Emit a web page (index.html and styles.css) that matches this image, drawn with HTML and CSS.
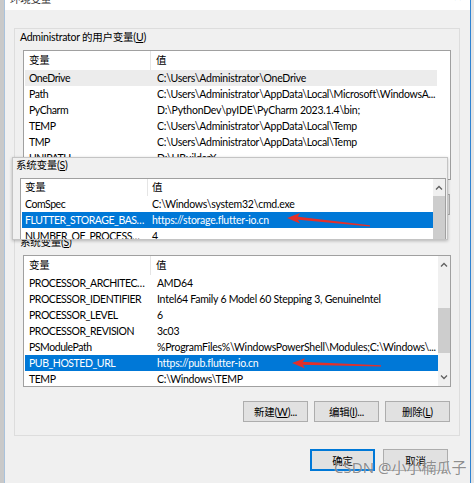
FILE: index.html
```html
<!DOCTYPE html>
<html lang="zh-CN">
<head>
    <meta charset="UTF-8">
    <title>环境变量</title>
    <link rel="stylesheet" href="styles.css">
</head>
<body>
    <div class="screen">
        <div class="edge-left"></div>
        <div class="dialog">
            <div class="titlebar">
                <span class="title">环境变量</span>
                <span class="close">✕</span>
            </div>
            <div class="dialog-body">
                <div class="group">
                    <div class="label">Administrator 的用户变量(<u>U</u>)</div>
                    <div class="list user-list">
                        <div class="list-head">
                            <div class="col-name">变量</div>
                            <div class="col-value">值</div>
                        </div>
                        <div class="list-main">
                            <div class="rows">
                                <div class="row hover"><div class="col-name">OneDrive</div><div class="col-value">C:\Users\Administrator\OneDrive</div></div>
                                <div class="row"><div class="col-name">Path</div><div class="col-value">C:\Users\Administrator\AppData\Local\Microsoft\WindowsA...</div></div>
                                <div class="row"><div class="col-name">PyCharm</div><div class="col-value">D:\PythonDev\pyIDE\PyCharm 2023.1.4\bin;</div></div>
                                <div class="row"><div class="col-name">TEMP</div><div class="col-value">C:\Users\Administrator\AppData\Local\Temp</div></div>
                                <div class="row"><div class="col-name">TMP</div><div class="col-value">C:\Users\Administrator\AppData\Local\Temp</div></div>
                                <div class="row"><div class="col-name">UNIPATH</div><div class="col-value">D:\HBuilderX</div></div>
                            </div>
                            <div class="scroll-blank"></div>
                        </div>
                    </div>
                    <div class="btn-row">
                        <button class="btn">新建(<u>N</u>)...</button>
                        <button class="btn">编辑(<u>E</u>)...</button>
                        <button class="btn">删除(<u>D</u>)</button>
                    </div>

                    <div class="label sys-label">系统变量(<u>S</u>)</div>
                    <div class="list sys-list">
                        <div class="list-main">
                            <div class="rows">
                                <div class="list-head">
                                    <div class="col-name">变量</div>
                                    <div class="col-value">值</div>
                                </div>
                                <div class="row"><div class="col-name">PROCESSOR_ARCHITECTURE</div><div class="col-value">AMD64</div></div>
                                <div class="row"><div class="col-name">PROCESSOR_IDENTIFIER</div><div class="col-value">Intel64 Family 6 Model 60 Stepping 3, GenuineIntel</div></div>
                                <div class="row"><div class="col-name">PROCESSOR_LEVEL</div><div class="col-value">6</div></div>
                                <div class="row"><div class="col-name">PROCESSOR_REVISION</div><div class="col-value">3c03</div></div>
                                <div class="row"><div class="col-name">PSModulePath</div><div class="col-value">%ProgramFiles%\WindowsPowerShell\Modules;C:\Windows\...</div></div>
                                <div class="row selected"><div class="col-name">PUB_HOSTED_URL</div><div class="col-value">https://pub.flutter-io.cn</div></div>
                                <div class="row"><div class="col-name">TEMP</div><div class="col-value">C:\Windows\TEMP</div></div>
                            </div>
                            <div class="scrollbar">
                                <div class="arrow"><svg width="8" height="5" viewBox="0 0 8 5"><polyline points="1,4.5 4,1.5 7,4.5" fill="none" stroke="#606060" stroke-width="1.3"/></svg></div>
                                <div class="track"><div class="thumb sys-thumb"></div></div>
                                <div class="arrow"><svg width="8" height="5" viewBox="0 0 8 5"><polyline points="1,0.5 4,3.5 7,0.5" fill="none" stroke="#606060" stroke-width="1.3"/></svg></div>
                            </div>
                        </div>
                    </div>
                    <div class="btn-row">
                        <button class="btn">新建(<u>W</u>)...</button>
                        <button class="btn">编辑(<u>I</u>)...</button>
                        <button class="btn">删除(<u>L</u>)</button>
                    </div>
                </div>

                <div class="footer">
                    <button class="btn btn-default">确定</button>
                    <button class="btn">取消</button>
                </div>
            </div>
        </div>
        <div class="edge-right"></div>

        <!-- pasted crop of the system variables list -->
        <div class="overlay">
            <div class="label overlay-label">系统变量(<u>S</u>)</div>
            <div class="list overlay-list">
                <div class="list-main">
                    <div class="rows">
                        <div class="list-head">
                            <div class="col-name">变量</div>
                            <div class="col-value">值</div>
                        </div>
                        <div class="row"><div class="col-name">ComSpec</div><div class="col-value">C:\Windows\system32\cmd.exe</div></div>
                        <div class="row selected"><div class="col-name">FLUTTER_STORAGE_BASE_URL</div><div class="col-value">https://storage.flutter-io.cn</div></div>
                        <div class="row"><div class="col-name">NUMBER_OF_PROCESSORS</div><div class="col-value">4</div></div>
                    </div>
                    <div class="scrollbar">
                        <div class="arrow"><svg width="8" height="5" viewBox="0 0 8 5"><polyline points="1,4.5 4,1.5 7,4.5" fill="none" stroke="#606060" stroke-width="1.3"/></svg></div>
                        <div class="track"><div class="thumb overlay-thumb"></div></div>
                    </div>
                </div>
            </div>
        </div>

        <svg class="arrows" width="474" height="483" viewBox="0 0 474 483">
            <polygon points="296,216.6 370,225.2 370,226.4 296,219.6" fill="#e3302a"/>
            <polygon points="287,218 300,213 297,218.3 300,223.4" fill="#e3302a"/>
            <polygon points="301,361.8 381,365.2 381,366.4 301,364.8" fill="#e3302a"/>
            <polygon points="292,363 305,358.2 302,363.3 305,368.4" fill="#e3302a"/>
        </svg>

        <div class="watermark">CSDN @小小楠瓜子</div>
    </div>
</body>
</html>
```

FILE: styles.css
```css
* {
  box-sizing: border-box;
  margin: 0;
  padding: 0;
}

body {
  font-family: Lato, "Noto Sans CJK SC", sans-serif;
  font-size: 10.5px;
  letter-spacing: -0.25px;
  color: #000;
  background-color: #d6d6d6;
}

u {
  text-decoration: underline;
  text-underline-offset: 1px;
}

.screen {
  position: relative;
  display: flex;
  width: 474px;
  height: 483px;
  overflow: hidden;
}

.edge-left {
  width: 4px;
  background-color: #c9c9c9;
}

.edge-right {
  width: 3px;
  background-color: #e4e4e4;
}

.dialog {
  width: 467px;
  display: flex;
  flex-direction: column;
  border-left: 1px solid #a9c2dc;
  border-right: 1px solid #2e82d2;
  background-color: #f0f0f0;
}

.titlebar {
  height: 10px;
  display: flex;
  justify-content: space-between;
  background-color: #fff;
  overflow: hidden;
}

.title {
  margin-top: -9px;
  padding-left: 5px;
  line-height: 16px;
  color: #333;
}

.close {
  margin-top: -10px;
  padding-right: 8px;
  line-height: 14px;
  font-size: 11px;
  color: #333;
}

.dialog-body {
  flex: 1;
  padding: 18px 0 0 9px;
}

.group {
  width: 446px;
  height: 408px;
  border: 1px solid #dddddd;
}

.label {
  height: 16px;
  line-height: 16px;
  margin-left: 5px;
  white-space: nowrap;
}

.sys-label {
  margin-top: 19px;
}

.list {
  margin: 5px 0 0 8px;
  width: 428px;
  border: 1px solid #a0a0a0;
  background-color: #fff;
  overflow: hidden;
}

.user-list {
  height: 130px;
}

.sys-list {
  height: 132px;
}

.list-head {
  display: flex;
  height: 19px;
  line-height: 19px;
}

.list-head .col-name {
  border-right: 1px solid #e5e5e5;
}

.list-main {
  display: flex;
}

.rows {
  flex: 1;
  min-width: 0;
}

.row {
  display: flex;
  height: 16px;
  line-height: 16px;
  margin-left: 1px;
}

.col-name {
  width: 127px;
  flex-shrink: 0;
  padding-left: 5px;
  white-space: nowrap;
  overflow: hidden;
}

.row .col-name {
  width: 126px;
  padding-left: 4px;
  padding-right: 2px;
  letter-spacing: -0.45px;
  text-overflow: ellipsis;
}

.col-value {
  flex: 1;
  padding-left: 5px;
  white-space: nowrap;
  overflow: hidden;
}

.row .col-value {
  padding-left: 6px;
}

.row.hover {
  background-color: #ececec;
}

.row.selected {
  background-color: #0078d7;
  color: #fff;
}

.scroll-blank {
  width: 13px;
}

.scrollbar {
  width: 12px;
  display: flex;
  flex-direction: column;
  background-color: #f0f0f0;
}

.sys-list .scrollbar {
  height: 130px;
}

.arrow {
  height: 17px;
  display: flex;
  align-items: center;
  justify-content: center;
}

.track {
  flex: 1;
}

.thumb {
  background-color: #cdcdcd;
}

.sys-thumb {
  margin-top: 35px;
  height: 45px;
}

.overlay-thumb {
  margin-top: 0;
  height: 60px;
}

.btn-row {
  display: flex;
  justify-content: flex-end;
  gap: 6px;
  margin: 14px 9px 0 0;
}

.btn {
  width: 65px;
  height: 21px;
  font-family: Lato, "Noto Sans CJK SC", sans-serif;
  font-size: 10.5px;
  letter-spacing: -0.25px;
  color: #000;
  background-color: #e1e1e1;
  border: 1px solid #adadad;
}

.footer {
  display: flex;
  justify-content: flex-end;
  gap: 8px;
  margin: 13px 22px 0 0;
}

.footer .btn {
  height: 22px;
}

.btn-default {
  border: 2px solid #0078d7;
}

.overlay {
  position: absolute;
  left: 12px;
  top: 157px;
  width: 436px;
  height: 83px;
  background-color: #f0f0f0;
  border: 1px solid #c4c4c4;
  box-shadow: 0 1px 3px rgba(0, 0, 0, 0.25);
  overflow: hidden;
}

.overlay-label {
  margin-left: 3px;
  line-height: 14px;
  height: 14px;
}

.overlay-list {
  margin: 6px 0 0 7px;
  width: 426px;
  height: 90px;
}

.overlay-list .list-head {
  height: 17px;
  line-height: 17px;
}

.overlay-list .list-head .col-name {
  width: 127px;
  padding-left: 4px;
}

.overlay-list .col-value {
  padding-left: 4px;
}

.overlay-list .row .col-name {
  width: 126px;
  padding-left: 3px;
}

.arrows {
  position: absolute;
  left: 0;
  top: 0;
  pointer-events: none;
}

.watermark {
  position: absolute;
  left: 334px;
  top: 456px;
  font-family: "Noto Sans", "Noto Sans CJK SC", sans-serif;
  font-size: 15px;
  line-height: 22px;
  letter-spacing: 0;
  color: rgba(70, 70, 70, 0.62);
  text-shadow: 0 0 1px rgba(255, 255, 255, 0.9);
  white-space: nowrap;
}
```
